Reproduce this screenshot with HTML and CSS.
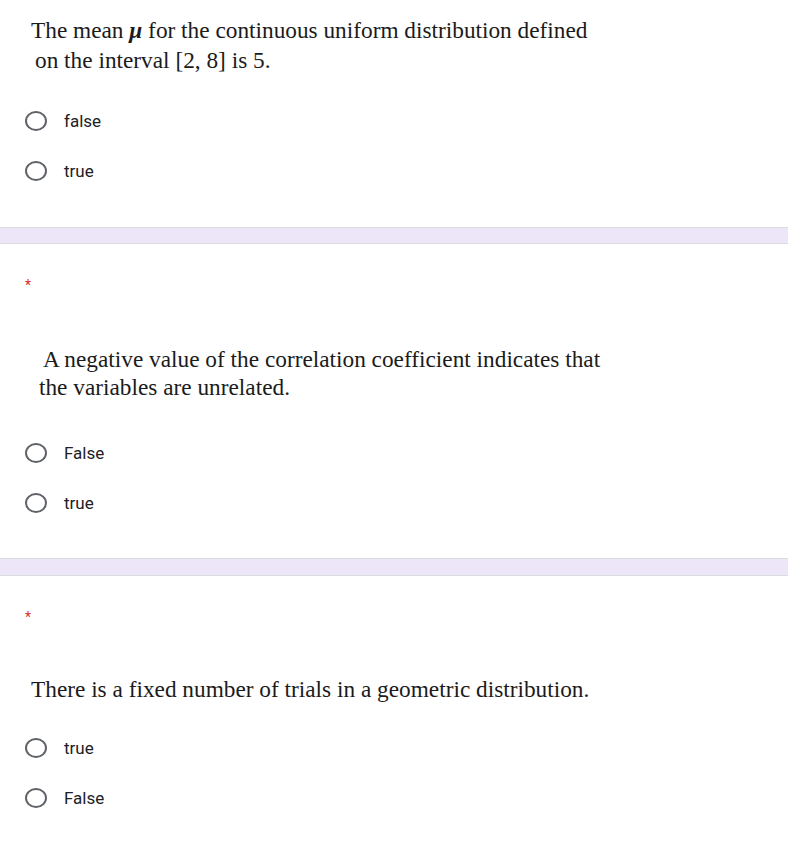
FILE: index.html
```html
<!DOCTYPE html>
<html>
<head>
<meta charset="utf-8">
<link rel="stylesheet" href="styles.css">
</head>
<body>
<div class="page">
  <section class="card card-1">
    <div class="question q1">
      <div class="line l1">The mean <i class="mu">μ</i> for the continuous uniform distribution defined</div>
      <div class="line l2">on the interval [2, 8] is 5.</div>
    </div>
    <div class="options opts-1">
      <label class="option"><span class="radio"></span><span class="opt-text">false</span></label>
      <label class="option"><span class="radio"></span><span class="opt-text">true</span></label>
    </div>
  </section>
  <div class="gap"></div>
  <section class="card card-2">
    <div class="star">*</div>
    <div class="question q2">
      <div class="line l1">A negative value of the correlation coefficient indicates that</div>
      <div class="line l2">the variables are unrelated.</div>
    </div>
    <div class="options opts-2">
      <label class="option"><span class="radio"></span><span class="opt-text">False</span></label>
      <label class="option"><span class="radio"></span><span class="opt-text">true</span></label>
    </div>
  </section>
  <div class="gap gap-2"></div>
  <section class="card card-3">
    <div class="star">*</div>
    <div class="question q3">
      <div class="line l1">There is a fixed number of trials in a geometric distribution.</div>
    </div>
    <div class="options opts-3">
      <label class="option"><span class="radio"></span><span class="opt-text">true</span></label>
      <label class="option"><span class="radio"></span><span class="opt-text">False</span></label>
    </div>
  </section>
</div>
</body>
</html>
```

FILE: styles.css
```css
html, body {
  margin: 0;
  padding: 0;
  background: #ffffff;
}

.page {
  width: 788px;
  display: flex;
  flex-direction: column;
}

.card {
  background: #ffffff;
  display: flex;
  flex-direction: column;
  flex: none;
  box-sizing: border-box;
}

.card-1 {
  padding-top: 15px;
  height: 228px;
  border-bottom: 1px solid #dadce0;
}

.card-2 {
  height: 316px;
  border-top: 1px solid #dadce0;
  border-bottom: 1px solid #dadce0;
}

.card-3 {
  height: 275px;
  border-top: 1px solid #dadce0;
}

.gap {
  height: 15px;
  background: #ece6f8;
  flex: none;
}

.gap-2 {
  height: 16px;
}

.question {
  font-family: "Liberation Serif", "Times New Roman", serif;
  font-size: 23.3px;
  line-height: 28px;
  color: #1b1b1b;
}

.q1 { line-height: 30px; }
.q1 .l1 { padding-left: 31px; }
.q1 .l2 { padding-left: 35px; }

.q2 { margin-top: 52px; }
.q2 .l1 { padding-left: 43px; }
.q2 .l2 { padding-left: 39px; }

.q3 { margin-top: 50px; }
.q3 .l1 { padding-left: 31px; }

.mu {
  font-weight: bold;
}

.star {
  font-family: "Roboto", "Liberation Sans", sans-serif;
  font-size: 14px;
  line-height: 16px;
  color: #d93025;
  padding-left: 25px;
  margin-top: 33px;
}

.options {
  display: flex;
  flex-direction: column;
}

.opts-1 { margin-top: 21px; }
.opts-2 { margin-top: 27px; }
.opts-3 { margin-top: 20px; }

.option {
  height: 50px;
  display: flex;
  align-items: center;
  padding-left: 25px;
}

.radio {
  width: 18px;
  height: 16px;
  border: 2px solid #5f6368;
  border-radius: 50%;
  flex: none;
}

.opt-text {
  font-family: "Roboto", "Liberation Sans", sans-serif;
  font-size: 17px;
  color: #202124;
  margin-left: 17px;
}
```
